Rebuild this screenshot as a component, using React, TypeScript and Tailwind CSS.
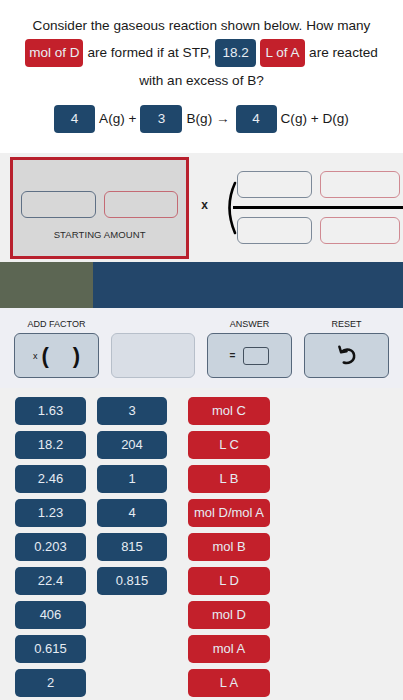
import React from "react";

const font = { fontFamily: '"Liberation Sans", Arial, sans-serif' };

function Pill({ children, color, className = "" }: { children: React.ReactNode; color: "blue" | "red"; className?: string }) {
  return (
    <span
      className={
        "inline-flex items-center justify-center h-[28px] rounded-[4px] text-[13.5px] text-[#e9eef4] " +
        (color === "blue" ? "bg-[#1f476b] " : "bg-[#c3202b] ") +
        className
      }
    >
      {children}
    </span>
  );
}

const col1 = ["1.63", "18.2", "2.46", "1.23", "0.203", "22.4", "406", "0.615", "2"];
const col2 = ["3", "204", "1", "4", "815", "0.815"];
const col3 = ["mol C", "L C", "L B", "mol D/mol A", "mol B", "L D", "mol D", "mol A", "L A"];

function Chip({ label, color, w }: { label: string; color: "blue" | "red"; w: string }) {
  return (
    <div
      className={
        "h-[28px] rounded-[5px] flex items-center justify-center text-[13px] text-[#e6ecf3] " +
        (color === "blue" ? "bg-[#1f476b] " : "bg-[#c3202b] ") +
        w
      }
    >
      {label}
    </div>
  );
}

export default function App() {
  return (
    <div className="w-[403px] h-[700px] overflow-hidden bg-white text-[#1a1a1a]" style={font}>
      {/* Question */}
      <div className="h-[153px] flex flex-col items-center">
        <div className="mt-[17px] text-[13.6px] leading-[18px]">Consider the gaseous reaction shown below. How many</div>
        <div className="mt-[4px] flex items-center text-[13.6px]">
          <Pill color="red" className="px-[4px]">mol of D</Pill>
          <span className="mx-[4px]">are formed if at STP,</span>
          <Pill color="blue" className="w-[41px]">18.2</Pill>
          <Pill color="red" className="ml-[4px] w-[45px]">L of A</Pill>
          <span className="ml-[4px]">are reacted</span>
        </div>
        <div className="mt-[5px] text-[13.6px] leading-[18px]">with an excess of B?</div>
        <div className="mt-[15px] flex items-center text-[13.6px]">
          <Pill color="blue" className="w-[41px]">4</Pill>
          <span className="ml-[4px] mr-[2px]">A(g) +</span>
          <Pill color="blue" className="ml-[2px] w-[42px]">3</Pill>
          <span className="ml-[4px] mr-[6px]">B(g) →</span>
          <Pill color="blue" className="w-[41px]">4</Pill>
          <span className="ml-[4px]">C(g) + D(g)</span>
        </div>
      </div>

      {/* Work panel */}
      <div className="h-[109px] bg-[#f0f0f0] flex items-center pl-[10px]">
        <div className="w-[183px] h-[102px] border-[3px] border-[#b8202d] bg-[#d7d7d7] flex flex-col items-center pt-[31px]">
          <div className="flex gap-[8px]">
            <div className="w-[75px] h-[27px] rounded-[6px] border-[1.5px] border-[#5f7085]" />
            <div className="w-[74px] h-[27px] rounded-[6px] border-[1.5px] border-[#c46a74]" />
          </div>
          <div className="mt-[10px] text-[9.5px] tracking-[0.1px] text-[#2a2a2a]">STARTING AMOUNT</div>
        </div>
        <div className="ml-[12px] -mt-[5px] text-[12px] font-bold text-[#222] w-[10px]">x</div>
        <svg width="20" height="58" viewBox="0 0 20 58" className="ml-[10px] shrink-0">
          <path d="M14 4 Q3 28 14 54" fill="none" stroke="#000" strokeWidth="2.6" strokeLinecap="round" />
        </svg>
        <div className="flex flex-col -ml-[8px] self-stretch justify-center">
          <div className="flex gap-[8px] pl-[4px]">
            <div className="w-[75px] h-[27px] rounded-[6px] border-[1.5px] border-[#7d8a99]" />
            <div className="w-[80px] h-[27px] rounded-[6px] border-[1.5px] border-[#d08a92]" />
          </div>
          <div className="h-[3px] bg-black my-[8px] w-[170px]" />
          <div className="flex gap-[8px] pl-[4px]">
            <div className="w-[75px] h-[27px] rounded-[6px] border-[1.5px] border-[#7d8a99]" />
            <div className="w-[80px] h-[27px] rounded-[6px] border-[1.5px] border-[#d08a92]" />
          </div>
        </div>
      </div>

      {/* Band */}
      <div className="h-[46px] flex">
        <div className="w-[93px] bg-[#5c6653]" />
        <div className="flex-1 bg-[#23466a]" />
      </div>

      {/* Toolbar */}
      <div className="h-[80px] bg-[#eeeff4] flex pl-[14px] gap-[12px] pt-[11px]">
        <div className="flex flex-col items-center w-[85px]">
          <div className="text-[9px] text-[#222] leading-[11px]">ADD FACTOR</div>
          <div className="mt-[3px] w-[85px] h-[45px] rounded-[6px] border-[1.5px] border-[#56677b] bg-[#c9d3dd] flex items-center justify-center text-[#111]">
            <span className="text-[9px] mr-[4px] mt-[2px]">x</span>
            <span className="text-[22px] leading-none font-bold">(</span>
            <span className="w-[24px]" />
            <span className="text-[22px] leading-none font-bold">)</span>
          </div>
        </div>
        <div className="flex flex-col items-center w-[84px]">
          <div className="h-[11px]" />
          <div className="mt-[3px] w-[84px] h-[45px] rounded-[6px] border-[1.5px] border-[#b7bfca] bg-[#d9dee6]" />
        </div>
        <div className="flex flex-col items-center w-[85px]">
          <div className="text-[9px] text-[#222] leading-[11px]">ANSWER</div>
          <div className="mt-[3px] w-[85px] h-[45px] rounded-[6px] border-[1.5px] border-[#56677b] bg-[#c9d3dd] flex items-center justify-center">
            <span className="text-[10px] text-[#222] mr-[8px] font-bold">=</span>
            <div className="w-[26px] h-[18px] rounded-[3px] border-[1.5px] border-[#44515f]" />
          </div>
        </div>
        <div className="flex flex-col items-center w-[85px]">
          <div className="text-[9px] text-[#222] leading-[11px]">RESET</div>
          <div className="mt-[3px] w-[85px] h-[45px] rounded-[6px] border-[1.5px] border-[#56677b] bg-[#c9d3dd] flex items-center justify-center">
            <svg width="22" height="24" viewBox="0 0 20 22">
              <path d="M5 7 C9 3.5 16 4.5 16.5 10.5 C17 16 11 18.5 7 17" fill="none" stroke="#111" strokeWidth="2.3" strokeLinecap="round" />
              <path d="M3 2.5 L4.6 7.6 L9.6 6.6" fill="none" stroke="#111" strokeWidth="2.3" strokeLinecap="round" strokeLinejoin="round" />
            </svg>
          </div>
        </div>
      </div>

      {/* Chips */}
      <div className="h-[312px] bg-[#f0f0f0] flex pt-[9px] pl-[15px]">
        <div className="flex flex-col gap-[6px]">
          {col1.map((v) => (
            <Chip key={v} label={v} color="blue" w="w-[71px]" />
          ))}
        </div>
        <div className="flex flex-col gap-[6px] ml-[11px]">
          {col2.map((v) => (
            <Chip key={v} label={v} color="blue" w="w-[70px]" />
          ))}
        </div>
        <div className="flex flex-col gap-[6px] ml-[21px]">
          {col3.map((v) => (
            <Chip key={v} label={v} color="red" w="w-[82px]" />
          ))}
        </div>
      </div>
    </div>
  );
}
